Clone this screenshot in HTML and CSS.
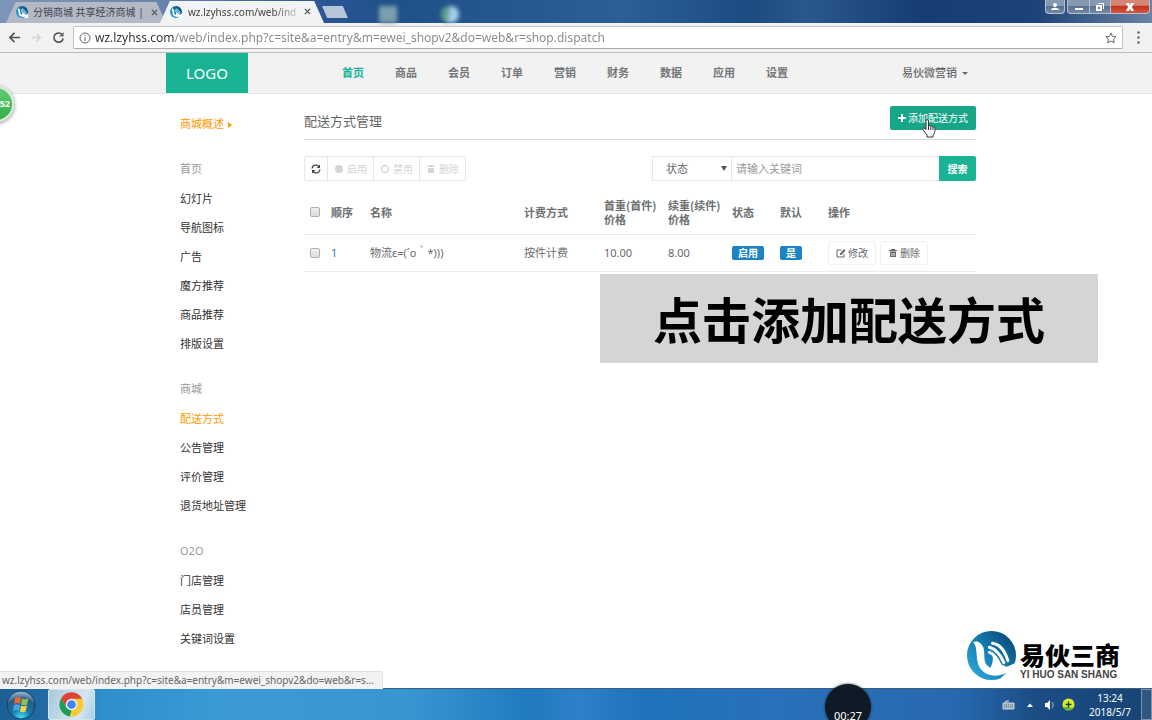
FILE: index.html
```html
<!DOCTYPE html>
<html lang="zh-CN">
<head>
<meta charset="utf-8">
<title>配送方式管理</title>
<link rel="stylesheet" href="styles.css">
</head>
<body>
<svg width="0" height="0" class="defs" aria-hidden="true">
  <defs>
    <linearGradient id="brand" x1="0" y1="1" x2="1" y2="0">
      <stop offset="0" stop-color="#37aede"/><stop offset=".5" stop-color="#127fb5"/><stop offset="1" stop-color="#043c66"/>
    </linearGradient>
    <symbol id="bird" viewBox="0 0 48 48">
      <circle cx="24" cy="24" r="24" fill="url(#brand)"/>
      <path fill="#fff" d="M6 11c2-1 5-1 7 1 4 3 4 8 4 13 0 6 2 9 6 11 2-4 3-8 2-12l5 4 4 5 5 2 9-4v17H34c-1-1-1-2 0-3l5-4c-8 4-18 4-24-2-6-6-5-14-6-20 0-3-1-6-3-8Z"/>
      <path fill="none" stroke="#fff" stroke-width="3" stroke-linecap="round" d="M25 12c7 1 12 7 15 17M22 16c7 2 11 8 14 15M22 21c5 2 8 7 10 12"/>
    </symbol>
  </defs>
</svg>

<header class="titlebar">
  <div class="tabs">
    <div class="tab"><svg class="fav"><use href="#bird"/></svg><span class="tab-text">分销商城 共享经济商城 |</span><button class="tab-x" aria-label="关闭标签页">
      <svg viewBox="0 0 8 8"><path d="M1 1l6 6M7 1L1 7"/></svg></button></div>
    <div class="tab active"><svg class="fav"><use href="#bird"/></svg><span class="tab-text fade">wz.lzyhss.com/web/ind</span><button class="tab-x" aria-label="关闭标签页">
      <svg viewBox="0 0 8 8"><path d="M1 1l6 6M7 1L1 7"/></svg></button></div>
    <button class="newtab" aria-label="新标签页"></button>
  </div>
  <div class="desk-blur one"></div>
  <div class="desk-blur two"></div>
  <div class="winbtns">
    <button class="wb user" aria-label="用户"><svg viewBox="0 0 10 10"><circle cx="5" cy="3" r="2"/><path d="M1 8c0-3 8-3 8 0Z"/></svg></button>
    <button class="wb min" aria-label="最小化"><svg viewBox="0 0 10 10"><path d="M1 6h8v2H1Z"/></svg></button>
    <button class="wb max" aria-label="还原"><svg viewBox="0 0 10 10"><path fill-rule="evenodd" d="M3 1h6v6H8V2H3ZM1 3h6v6H1Zm2 2v2h2V5Z"/></svg></button>
    <button class="wb close" aria-label="关闭"><svg viewBox="0 0 10 10"><path d="M1 1h3l1 2 1-2h3L7 5l2 4H6L5 7 4 9H1l2-4Z"/></svg></button>
  </div>
</header>

<div class="toolbar">
  <button class="tool" aria-label="后退"><svg viewBox="0 0 14 14"><path d="M13 7H2M7 2L2 7l5 5"/></svg></button>
  <button class="tool off" aria-label="前进" disabled><svg viewBox="0 0 14 14"><path d="M2 7h9M7 3l4 4-4 4"/></svg></button>
  <button class="tool" aria-label="刷新"><svg viewBox="0 0 14 14"><path d="M11 4a5 5 0 1 0 1 4"/><path d="M12.500 1v5h-5Z" class="solid"/></svg></button>
  <div class="omnibox">
    <svg class="info" viewBox="0 0 12 12"><circle cx="6" cy="6" r="5"/><path d="M6 5v4M6 3v1"/></svg>
    <input class="url" type="text" aria-label="地址栏" value="wz.lzyhss.com/web/index.php?c=site&amp;a=entry&amp;m=ewei_shopv2&amp;do=web&amp;r=shop.dispatch">
    <svg class="star" viewBox="0 0 12 12"><path d="M6 1l1.500 3.400 3.600.4-2.700 2.400.8 3.600L6 9l-3.200 1.800.8-3.600L.9 4.800l3.600-.4Z"/></svg>
  </div>
  <button class="menu" aria-label="菜单"><svg viewBox="0 0 4 12"><circle cx="2" cy="2" r="1"/><circle cx="2" cy="6" r="1"/><circle cx="2" cy="10" r="1"/></svg></button>
</div>

<div class="site">
  <div class="site-head">
    <div class="wrap head-row">
      <a class="logo" href="#">LOGO</a>
      <nav class="nav">
        <a class="on" href="#">首页</a><a href="#">商品</a><a href="#">会员</a><a href="#">订单</a><a href="#">营销</a><a href="#">财务</a><a href="#">数据</a><a href="#">应用</a><a href="#">设置</a>
      </nav>
      <button class="account">易伙微营销<i class="caret"></i></button>
    </div>
  </div>

  <div class="wrap body-row">
    <aside class="side">
      <a class="hot" href="#">商城概述<i class="right"></i></a>
      <section><h4>首页</h4><a href="#">幻灯片</a><a href="#">导航图标</a><a href="#">广告</a><a href="#">魔方推荐</a><a href="#">商品推荐</a><a href="#">排版设置</a></section>
      <section><h4>商城</h4><a class="hot" href="#">配送方式</a><a href="#">公告管理</a><a href="#">评价管理</a><a href="#">退货地址管理</a></section>
      <section><h4>O2O</h4><a href="#">门店管理</a><a href="#">店员管理</a><a href="#">关键词设置</a></section>
    </aside>

    <main class="main">
      <div class="page-title">
        <h1>配送方式管理</h1>
        <button class="add"><svg viewBox="0 0 8 8"><path d="M3 0h2v3h3v2H5v3H3V5H0V3h3Z"/></svg>添加配送方式
          <svg class="hand" viewBox="0 0 14 19"><path d="M4 1c1.500-.8 2.500 0 2.500 1v5c1-.8 2-.4 2.300.3 1-.5 1.900-.1 2.200.7 1.200-.3 2 .3 2 1.500 0 3-.5 5-2 7v1.500H5V16L1 11c-1-1.600.5-2.700 1.600-1.600L4 10.500V1Z"/><path d="M6.500 7v4M8.800 7.500V11M11 8v3"/></svg>
        </button>
      </div>

      <div class="filters">
        <div class="group">
          <button aria-label="刷新列表"><svg class="ref" viewBox="0 0 10 10"><path d="M1 4.500A4 4 0 0 1 8 2.500M9 5.500A4 4 0 0 1 2 7.500"/><path class="solid" d="M9 .5v3.600H5.500ZM1 9.500V5.900h3.500Z"/></svg></button>
          <button disabled><svg viewBox="0 0 10 10"><circle class="solid" cx="5" cy="5" r="4"/></svg>启用</button>
          <button disabled><svg viewBox="0 0 10 10"><circle cx="5" cy="5" r="3.500"/></svg>禁用</button>
          <button disabled><svg viewBox="0 0 10 10"><path class="solid" d="M1 2h2V1h4v1h2v1H1ZM2 4h6v5H2Z"/></svg>删除</button>
        </div>
        <form class="search">
          <div class="pick"><select aria-label="状态"><option>状态</option></select></div>
          <input type="text" aria-label="关键词" placeholder="请输入关键词">
          <button type="button">搜索</button>
        </form>
      </div>

      <table class="list">
        <colgroup><col class="c-check"><col class="c-no"><col><col class="c-bill"><col class="c-price"><col class="c-price"><col class="c-flag"><col class="c-flag"><col class="c-act"></colgroup>
        <thead><tr><th><input type="checkbox" aria-label="全选"></th><th>顺序</th><th>名称</th><th>计费方式</th><th>首重(首件)<br>价格</th><th>续重(续件)<br>价格</th><th>状态</th><th>默认</th><th>操作</th></tr></thead>
        <tbody><tr>
          <td><input type="checkbox" aria-label="选择第1行"></td><td><a href="#">1</a></td><td>物流ε=(´ο｀*)))</td><td>按件计费</td><td>10.00</td><td>8.00</td>
          <td><span class="tag">启用</span></td><td><span class="tag">是</span></td>
          <td><div class="acts">
            <button><svg viewBox="0 0 10 10"><path d="M8 6v3H1V2h4.500"/><path class="solid" d="M4 5.500L8 1l1.500 1.500L5.500 7H4Z"/></svg>修改</button>
            <button><svg viewBox="0 0 10 10"><path class="solid" fill-rule="evenodd" d="M1 2h2V1h4v1h2v1H1ZM2 3.500h6V9H2ZM3.500 5v3h.6V5Zm1.200 0v3h.6V5Zm1.200 0v3h.6V5Z"/></svg>删除</button>
          </div></td>
        </tr></tbody>
      </table>
    </main>
  </div>
</div>

<footer class="taskbar">
  <button class="start" aria-label="开始"><svg viewBox="0 0 30 30">
    <defs><radialGradient id="orb" cx=".5" cy=".95" r=".95"><stop offset="0" stop-color="#3fe0ff"/><stop offset=".35" stop-color="#167aa8"/><stop offset=".7" stop-color="#285a84"/><stop offset="1" stop-color="#a9c5d8"/></radialGradient></defs>
    <circle cx="15" cy="15" r="14" fill="url(#orb)" stroke="#173f63"/>
    <path fill="#e8683a" d="M9 8c2-1.500 4-1.500 6 0l-1 6c-2-1.300-4-1.300-6 0Z"/><path fill="#8cc152" d="M16 8.500c2 1 4 1 6.500 0l-1.500 6c-2 1-4 1-6 0Z"/>
    <path fill="#4aa5e0" d="M8 15c2-1 4-1 6 0l-1 6c-2-1.300-4-1.300-6 0Z"/><path fill="#f8cf48" d="M15 15.500c2 1 4 1 6 0l-1.500 6c-2 1-3.500 1-5.500 0Z"/></svg></button>
  <button class="task" aria-label="Chrome"><svg viewBox="0 0 24 24">
    <circle cx="12" cy="12" r="11.500" fill="#f9cb38"/><path fill="#dc4437" d="M2 6.200A11.500 11.500 0 0 1 22.200 6.500H12L7 14.500Z"/>
    <path fill="#1c9d58" d="M2 6.200l5 8.500L12 17.500l-1.600 5.900A11.500 11.500 0 0 1 2 6.200Z"/><circle cx="12" cy="12" r="5.500" fill="#f4f6f8"/><circle cx="12" cy="12" r="4.200" fill="#4285f4"/></svg></button>
  <div class="tray">
    <svg class="kbd" viewBox="0 0 13 10"><path d="M1 3h11v6H1ZM3 3l1-2h3" fill="#a9b4c0" stroke="#c7d0d8"/><path d="M2 5h9M2 7h9" stroke="#6c7f94" stroke-dasharray="1 1"/></svg>
    <svg class="up" viewBox="0 0 6 4"><path d="M0 4l3-3.500L6 4Z" fill="#fff"/></svg>
    <svg class="vol" viewBox="0 0 9 12"><path d="M0 4h2l3-3v10L2 8H0Z" fill="#fff"/><path d="M7 3c1.500 2 1.500 4 0 6" fill="none" stroke="#a8c2dc"/></svg>
    <svg class="safe" viewBox="0 0 13 13"><circle cx="6.500" cy="6.500" r="6" fill="#e2ea2c"/><path d="M1 9c2 4 7 5 11 0-2 1-4 1-6 0Z" fill="#58b834"/><path d="M5.800 3.500h1.400v2.300h2.300v1.400H7.200v2.300H5.800V7.200H3.500V5.800h2.300Z" fill="#174c1a"/></svg>
    <div class="clock"><time>13:24</time><time>2018/5/7</time></div>
  </div>
  <div class="peek"></div>
  <div class="timer">00:27</div>
  <div class="status">wz.lzyhss.com/web/index.php?c=site&amp;a=entry&amp;m=ewei_shopv2&amp;do=web&amp;r=s...</div>
  <div class="watermark">
    <svg><use href="#bird"/></svg>
    <div class="wm-text"><strong>易伙三商</strong><span>YI HUO SAN SHANG</span></div>
  </div>
</footer>

<div class="ball">52</div>
<div class="caption">点击添加配送方式</div>
</body>
</html>
```

FILE: styles.css
```css
* { box-sizing: border-box; }
body {
  margin: 0; min-height: 100vh; display: flex; flex-direction: column; position: relative; overflow: hidden;
  background: #fff; color: #676a6c; font: 11px/14px "Noto Sans", "Noto Sans CJK SC", sans-serif;
}
button, input, select { font: inherit; color: inherit; margin: 0; padding: 0; border: 0; background: none; }
button { white-space: nowrap; }
a { color: inherit; text-decoration: none; }
h1, h4 { margin: 0; font-weight: 400; }
svg { display: block; flex: none; }
.defs { position: absolute; }

/* browser window */
.titlebar {
  position: relative; height: 23px; display: flex; justify-content: space-between;
  background: linear-gradient(90deg, #7d95b8 0, #6883ad 14%, #2c5695 28%, #1f5089 34%, #2c5f96 54%, #1c4b82 65%, #2a588c 70%, #153d74 80%, #1c4378 90%, #6a83a4 100%);
}
.tabs { display: flex; align-items: flex-end; padding-left: 6px; }
.tab {
  width: 160px; height: 21px; display: flex; align-items: center; gap: 5px; padding: 0 10px 1px;
  background: #b3bac5; color: #3c4450; font-size: 10px; clip-path: polygon(6% 0, 94% 0, 100% 100%, 0 100%);
}
.tab.active { width: 164px; height: 22px; margin-left: -6px; padding-right: 14px; gap: 6px; background: #f2f3f4; color: #444; }
.fav { width: 12px; height: 12px; }
.tab-text { flex: 1; white-space: nowrap; }
.fade { -webkit-mask-image: linear-gradient(90deg, #000 80%, #0004); mask-image: linear-gradient(90deg, #000 80%, #0004); }
.tab-x { padding: 2px; }
.tab-x svg { width: 7px; height: 7px; fill: none; stroke: #555; stroke-width: 1.5; }
.newtab { width: 26px; height: 12px; margin: 0 0 5px -2px; background: #b7c6d8; clip-path: polygon(0 0, 80% 0, 100% 100%, 20% 100%); }
.desk-blur { position: absolute; top: 6px; width: 18px; height: 17px; filter: blur(2px); background: #7d9fae; }
.one { left: 379px; }
.two { left: 441px; border-radius: 8px; background: linear-gradient(100deg, #5f9b87 35%, #a7cdea 50%); }
.winbtns { display: flex; align-items: flex-start; padding-right: 2px; }
.wb {
  height: 14px; display: grid; place-items: center; border: 1px solid #b3c0d0; border-top: 0;
  background: linear-gradient(#8699b1 45%, #5b718f 50%, #7589a3);
}
.wb svg { width: 10px; height: 10px; fill: #fff; }
.user { width: 20px; margin-right: 2px; border-radius: 0 0 4px 4px; }
.min { width: 23px; border-radius: 0 0 0 4px; }
.max { width: 21px; border-left: 0; }
.close { width: 39px; border-left: 0; border-radius: 0 0 4px 0; background: linear-gradient(#d48575 40%, #c4321c 50%, #d8563b); }

.toolbar {
  height: 30px; display: flex; align-items: center; padding: 0 7px 0 3px;
  background: #f2f2f2; border-bottom: 1px solid #bcbcbc;
}
.tool { width: 22px; height: 22px; display: grid; place-items: center; }
.tool svg { width: 13px; height: 13px; fill: none; stroke: #505050; stroke-width: 1.7; }
.off svg { stroke: #d4d4d4; }
svg .solid { fill: currentColor; stroke: none; }
.omnibox {
  flex: 1; height: 23px; display: flex; align-items: center; gap: 4px; margin: 0 8px 0 4px; padding: 0 5px;
  background: #fff; border: 1px solid #c4c4c4; border-bottom-color: #aaa; border-radius: 2px;
}
.info, .star { width: 12px; height: 12px; fill: none; stroke: #666; }
.url {
  flex: 1; min-width: 0; height: 20px; font-size: 12px; color: transparent;
  background: linear-gradient(90deg, #333 79px, #888 79px) text; -webkit-background-clip: text;
}
.menu { width: 14px; height: 20px; display: grid; place-items: center; }
.menu svg { width: 5px; height: 15px; fill: #666; }

/* shop site */
.site { flex: 1; }
.wrap { width: 100%; max-width: 820px; margin: 0 auto; padding-right: 10px; display: flex; }
.site-head { background: #f2f2f2; border-bottom: 1px solid #e4e4e4; }
.head-row { align-items: center; }
.logo { width: 82px; height: 40px; background: #1ab394; color: #fff; font-size: 15px; line-height: 40px; text-align: center; }
.nav { display: flex; gap: 31px; margin-left: 94px; font-weight: 700; color: #747678; }
.on { color: #1ab394; }
.account { display: flex; align-items: center; gap: 5px; margin: 0 8px 0 auto; font-weight: 500; }
.caret { border: 3px solid transparent; border-top-color: #676a6c; border-bottom: 0; }

.side { width: 138px; padding: 15px 0 0 14px; color: #333; }
.side a { display: block; line-height: 29px; }
.side section { margin-top: 16px; }
.side h4 { font-size: 11px; line-height: 30px; color: #999; }
.side .hot { color: #f90; }
.right { display: inline-block; margin-left: 4px; border: 3px solid transparent; border-left: 4px solid #f90; border-right: 0; }

.main { flex: 1; min-width: 0; }
.page-title { display: flex; justify-content: space-between; padding: 12px 0 9px; border-bottom: 1px solid #d3d6d6; }
h1 { font-size: 13px; line-height: 30px; margin-bottom: -6px; color: #666; }
.add {
  position: relative; height: 24px; display: flex; align-items: center; gap: 2px; padding: 0 8px;
  border-radius: 2px; background: #18a689; color: #fff; font-size: 10px;
}
.add > svg:first-child { width: 8px; height: 8px; fill: #fff; }
.add .hand { position: absolute; left: 32px; top: 13px; width: 14px; height: 19px; fill: #fff; stroke: #333; }

.filters { display: flex; justify-content: space-between; margin-top: 16px; height: 25px; }
.group { display: flex; border: 1px solid #e4e6e6; border-radius: 2px; font-size: 10px; }
.group button { display: flex; align-items: center; gap: 3px; padding: 0 6px; border-left: 1px solid #e4e6e6; }
.group button:first-child { border-left: 0; color: #444; }
.group button:disabled { color: #d4d5d5; }
.group svg, .acts svg { width: 10px; height: 10px; fill: none; stroke: currentColor; stroke-width: 1.3; }
.search { display: flex; width: 324px; }
.pick { position: relative; width: 80px; }
.pick::after { content: ""; position: absolute; right: 5px; top: 10px; border: 3px solid transparent; border-top: 5px solid #555; border-bottom: 0; }
.pick select { width: 100%; height: 25px; padding-left: 13px; border: 1px solid #e5e6e7; appearance: none; }
.search input { flex: 1; min-width: 0; padding-left: 4px; border: 1px solid #e5e6e7; border-width: 1px 0; }
.search input::placeholder { color: #999; }
.search button { width: 37px; border-radius: 0 2px 2px 0; background: #1ab394; color: #fff; font-size: 10px; font-weight: 700; }

.list { width: 100%; margin-top: 9px; border-collapse: collapse; table-layout: fixed; }
.list th, .list td { padding: 0; text-align: left; vertical-align: middle; white-space: nowrap; }
.list th { height: 44px; font-family: "Noto Sans CJK SC", sans-serif; font-weight: 700; color: #6c6e70; border-bottom: 1px solid #e7e7e7; }
.list td { height: 37px; border-bottom: 1px solid #ebebeb; }
.list td a { color: #337ab7; }
.c-check { width: 27px; }
.c-no { width: 39px; }
.c-bill { width: 80px; }
.c-price { width: 64px; }
.c-flag { width: 48px; }
.c-act { width: 148px; }
.list input {
  appearance: none; display: block; width: 10px; height: 10px; margin-left: 6px;
  border: 1px solid #b0b0b0; border-radius: 2px; background: linear-gradient(#f0f0f0, #dcdcdc);
}
.tag { display: inline-block; padding: 0 6px; border-radius: 2px; background: #1c84c6; color: #fff; font-size: 10px; font-weight: 700; }
.acts { display: flex; gap: 4px; font-size: 10px; }
.acts button { height: 24px; display: flex; align-items: center; gap: 2px; padding: 0 7px; border: 1px solid #f0f1f1; border-radius: 2px; }
.acts svg { stroke-width: 1; }

/* desktop taskbar */
.taskbar {
  position: relative; height: 32px; display: flex; align-items: center; border-top: 1px solid #3b5d80; color: #fff;
  background: linear-gradient(90deg, #1b5f98 0, #226ba5 4%, #2e8fcd 9%, #3c9bd4 20%, #3795d0 36%, #2179be 46%, #2e80c8 50%, #1f73bb 56%, #2970ba 68%, #2769ae 83%, #1b4c84 90%, #184474 100%);
}
.start { width: 48px; padding-left: 6px; }
.start svg { width: 30px; height: 30px; }
.task { width: 47px; height: 31px; display: grid; place-items: center; border: 1px solid #d4e6f2; border-radius: 2px; background: linear-gradient(110deg, #a9c9dd, #d5e7f2 70%, #a5cce3); }
.task svg { width: 25px; height: 25px; }
.tray { display: flex; align-items: center; gap: 12px; margin-left: auto; }
.kbd { width: 13px; height: 10px; }
.up { width: 6px; height: 4px; }
.vol { width: 9px; height: 12px; }
.safe { width: 13px; height: 13px; margin-left: -4px; }
.clock { width: 46px; display: grid; text-align: center; font-size: 10px; line-height: 14px; }
.peek { width: 11px; height: 31px; margin-left: 8px; border: 1px solid #8093aa; background: #52709a66; }
.timer {
  position: absolute; left: 825px; top: -5px; width: 46px; height: 46px; border-radius: 50%;
  background: #101a26; box-shadow: 0 0 3px #203040; text-align: center; font-size: 11px; line-height: 64px;
}
.status {
  position: absolute; left: 0; bottom: 100%; width: 383px; height: 18px; padding-left: 2px; overflow: hidden; white-space: nowrap;
  border: 1px solid #e0e0e0; border-width: 1px 1px 0 0; border-radius: 0 3px 0 0; background: #f2f2f2; color: #666; font-size: 10px; line-height: 17px;
}
.watermark { position: absolute; right: 32px; bottom: 40px; display: flex; align-items: center; gap: 4px; }
.watermark svg { width: 49px; height: 49px; }
.wm-text { display: grid; padding-top: 6px; color: #000; }
.wm-text strong { font: 900 25px/32px "Noto Sans CJK SC", sans-serif; }
.wm-text span { color: #444; font: 700 10px/10px "Liberation Sans", sans-serif; white-space: nowrap; }

/* floating overlays */
.ball {
  position: absolute; left: -22px; top: 86px; width: 36px; height: 36px; padding-right: 2px; border: 2px solid #d7ead9; border-radius: 50%;
  background: linear-gradient(#60cc70, #2fae47); box-shadow: 0 1px 4px #888; color: #fff; font-size: 9px; font-weight: 700; line-height: 31px; text-align: right;
}
.caption {
  position: absolute; left: 600px; top: 274px; width: 498px; height: 89px; background: #d5d5d5; color: #000;
  font: 700 49px/87px "Noto Sans CJK SC", sans-serif; text-align: center; white-space: nowrap;
}
```
